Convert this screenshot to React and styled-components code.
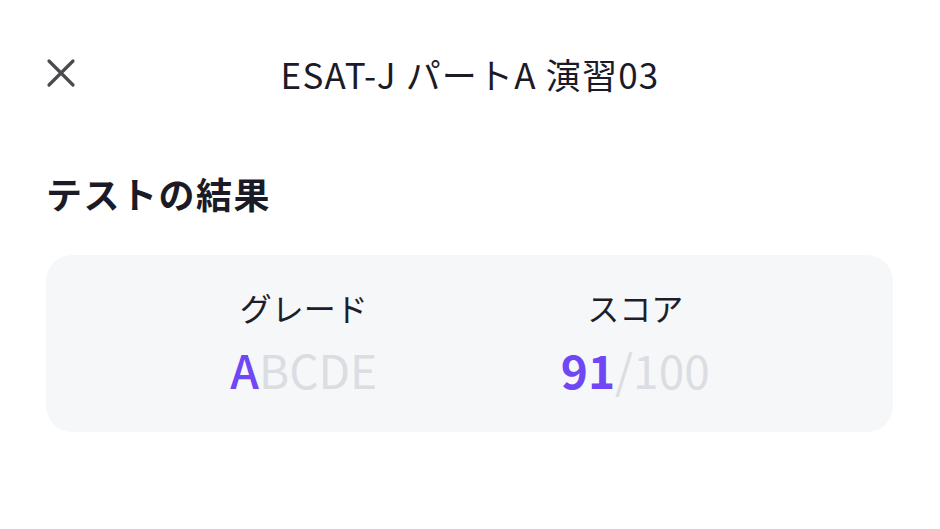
import React from 'react';
import styled, { createGlobalStyle } from 'styled-components';

const GlobalStyle = createGlobalStyle`
  html, body {
    margin: 0;
    padding: 0;
    background: #ffffff;
  }
  body {
    font-family: "Noto Sans CJK JP", "Noto Sans", sans-serif;
    color: #1b1b28;
  }
`;

function CloseIcon() {
  return (
    <svg width="30" height="30" viewBox="0 0 30 30" fill="none">
      <path
        d="M3 3 L27 27 M27 3 L3 27"
        stroke="#4a4a4f"
        strokeWidth="3.2"
        strokeLinecap="round"
      />
    </svg>
  );
}

function ResultItem({ label, children }) {
  return (
    <Column>
      <Label>{label}</Label>
      <Value>{children}</Value>
    </Column>
  );
}

export default function App() {
  return (
    <>
      <GlobalStyle />
      <Page>
        <Header>
          <CloseButton aria-label="閉じる">
            <CloseIcon />
          </CloseButton>
          <Title>ESAT-J パートA 演習03</Title>
          <span />
        </Header>

        <Content>
          <Heading>テストの結果</Heading>

          <Card>
            <ResultItem label="グレード">
              <Accent>A</Accent>
              <Muted>BCDE</Muted>
            </ResultItem>
            <ResultItem label="スコア">
              <Accent $bold>91</Accent>
              <Muted>/100</Muted>
            </ResultItem>
          </Card>
        </Content>
      </Page>
    </>
  );
}

const Page = styled.div`
  width: 940px;
  height: 529px;
`;

const Header = styled.header`
  height: 146px;
  box-sizing: border-box;
  padding: 0 46px;
  display: grid;
  grid-template-columns: 1fr auto 1fr;
  align-items: center;
`;

const CloseButton = styled.button`
  justify-self: start;
  width: 30px;
  height: 30px;
  padding: 0;
  border: none;
  background: none;
  display: flex;
  cursor: pointer;
`;

const Title = styled.h1`
  margin: 0;
  font-size: 35px;
  font-weight: 400;
  line-height: 1.4;
  letter-spacing: 1.2px;
  color: #1b1b28;
`;

const Content = styled.main`
  padding: 0 47px 0 46px;
`;

const Heading = styled.h2`
  margin: 22px 0 0;
  font-size: 36px;
  font-weight: 700;
  line-height: 50px;
  letter-spacing: 1.5px;
  color: #1b1b28;
`;

const Card = styled.section`
  margin-top: 37px;
  height: 177px;
  box-sizing: border-box;
  padding: 30px 92px 0;
  border-radius: 26px;
  background: #f6f7f9;
  display: grid;
  grid-template-columns: 1fr 1fr;
`;

const Column = styled.div`
  display: flex;
  flex-direction: column;
  align-items: center;
`;

const Label = styled.div`
  font-size: 32px;
  font-weight: 400;
  line-height: 45px;
  color: #1e1e2a;
`;

const Value = styled.div`
  margin-top: 8px;
  font-size: 46px;
  line-height: 62px;
  white-space: nowrap;
`;

const Accent = styled.span`
  color: #6f47f5;
  font-weight: ${(p) => (p.$bold ? 700 : 500)};
`;

const Muted = styled.span`
  color: #dcdde2;
  font-weight: 400;
`;
